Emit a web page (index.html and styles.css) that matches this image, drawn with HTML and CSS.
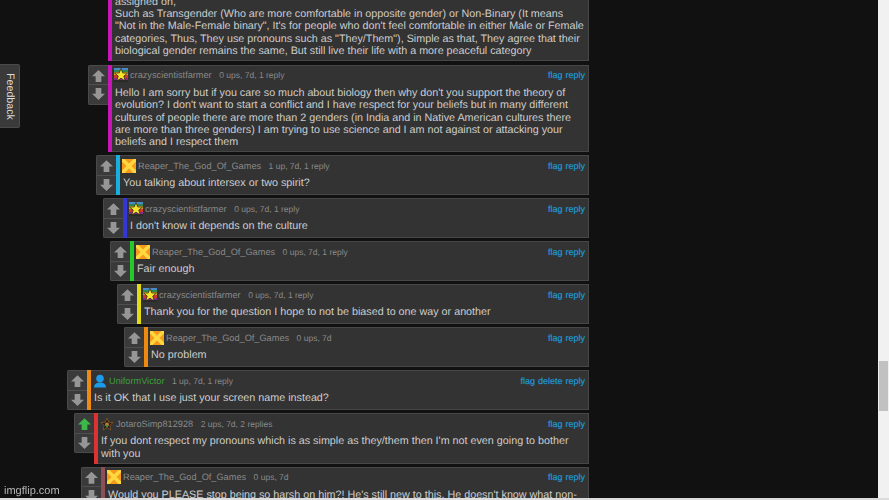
FILE: index.html
```html
<!DOCTYPE html>
<html lang="en">
<head>
  <meta charset="UTF-8" />
  <meta name="viewport" content="width=device-width, initial-scale=1.0"/>
  <title>Comments</title>
  <link rel="stylesheet" href="styles.css">
</head>
<body>

  <!-- Shared avatars -->
  <svg class="defs" width="0" height="0">
    <symbol id="av-flag" viewBox="0 0 14 14">
      <rect width="14" height="2" y="0" fill="#4a8ac8"/>
      <rect width="14" height="2" y="2" fill="#2d8a4e"/>
      <rect width="14" height="3" y="4" fill="#d8a020"/>
      <rect width="14" height="3" y="7" fill="#c83a2a"/>
      <rect width="14" height="2" y="10" fill="#8a2a8a"/>
      <rect width="14" height="2" y="12" fill="#2a2a2a"/>
      <polygon points="7,.5 8.800,5 13.500,5 9.800,8 11.200,13 7,10.200 2.800,13 4.200,8 .5,5 5.200,5" fill="#f6e52a" stroke="#1c1c1c" stroke-width=".7"/>
    </symbol>
    <symbol id="av-reaper" viewBox="0 0 14 14">
      <rect width="14" height="14" fill="#f59a1c"/>
      <path d="M0 0L14 14M14 0L0 14" stroke="#ffd840" stroke-width="3.500"/>
    </symbol>
    <symbol id="av-user" viewBox="0 0 14 14">
      <circle cx="7" cy="4.500" r="3.800" fill="#1c9bea"/>
      <path d="M1 13.500c0-3.500 2.500-5 6-5s6 1.500 6 5z" fill="#1c9bea"/>
    </symbol>
    <symbol id="av-star" viewBox="0 0 14 14">
      <polygon points="7,1 8.800,5.200 13,5.500 9.800,8.400 10.800,13 7,10.500 3.200,13 4.200,8.400 1,5.500 5.200,5.200" fill="#1d1d1d" stroke="#8a5a20" stroke-width=".8"/>
      <circle cx="7" cy="7.500" r="2" fill="#c8782a"/>
      <circle cx="7" cy="9" r="1.200" fill="#3f8f4f"/>
    </symbol>
  </svg>

  <div class="page">
    <div class="thread">

      <div class="com cut">
        <div class="bar magenta"></div>
        <div class="body">
          <p class="text">assigned on,<br>Such as Transgender (Who are more comfortable in opposite gender) or Non-Binary (It means "Not in the Male-Female binary", It's for people who don't feel comfortable in either Male or Female categories, Thus, They use pronouns such as "They/Them"), Simple as that, They agree that their biological gender remains the same, But still live their life with a more peaceful category</p>
        </div>
      </div>

      <div class="com d3">
        <div class="vote"><button class="up"></button><button class="down"></button></div>
        <div class="bar magenta"></div>
        <div class="body">
          <div class="head">
            <svg class="av"><use href="#av-flag"/></svg>
            <span class="name">crazyscientistfarmer</span>
            <span class="stats">0 ups, 7d, 1 reply</span>
            <span class="links"><a>flag</a><a>reply</a></span>
          </div>
          <p class="text">Hello I am sorry but if you care so much about biology then why don't you support the theory of evolution? I don't want to start a conflict and I have respect for your beliefs but in many different cultures of people there are more than 2 genders (in India and in Native American cultures there are more than three genders) I am trying to use science and I am not against or attacking your beliefs and I respect them</p>
        </div>
      </div>

      <div class="com d4">
        <div class="vote"><button class="up"></button><button class="down"></button></div>
        <div class="bar cyan"></div>
        <div class="body">
          <div class="head">
            <svg class="av"><use href="#av-reaper"/></svg>
            <span class="name">Reaper_The_God_Of_Games</span>
            <span class="stats">1 up, 7d, 1 reply</span>
            <span class="links"><a>flag</a><a>reply</a></span>
          </div>
          <p class="text">You talking about intersex or two spirit?</p>
        </div>
      </div>

      <div class="com d5">
        <div class="vote"><button class="up"></button><button class="down"></button></div>
        <div class="bar blue"></div>
        <div class="body">
          <div class="head">
            <svg class="av"><use href="#av-flag"/></svg>
            <span class="name">crazyscientistfarmer</span>
            <span class="stats">0 ups, 7d, 1 reply</span>
            <span class="links"><a>flag</a><a>reply</a></span>
          </div>
          <p class="text">I don't know it depends on the culture</p>
        </div>
      </div>

      <div class="com d6">
        <div class="vote"><button class="up"></button><button class="down"></button></div>
        <div class="bar green"></div>
        <div class="body">
          <div class="head">
            <svg class="av"><use href="#av-reaper"/></svg>
            <span class="name">Reaper_The_God_Of_Games</span>
            <span class="stats">0 ups, 7d, 1 reply</span>
            <span class="links"><a>flag</a><a>reply</a></span>
          </div>
          <p class="text">Fair enough</p>
        </div>
      </div>

      <div class="com d7">
        <div class="vote"><button class="up"></button><button class="down"></button></div>
        <div class="bar yellow"></div>
        <div class="body">
          <div class="head">
            <svg class="av"><use href="#av-flag"/></svg>
            <span class="name">crazyscientistfarmer</span>
            <span class="stats">0 ups, 7d, 1 reply</span>
            <span class="links"><a>flag</a><a>reply</a></span>
          </div>
          <p class="text">Thank you for the question I hope to not be biased to one way or another</p>
        </div>
      </div>

      <div class="com d8">
        <div class="vote"><button class="up"></button><button class="down"></button></div>
        <div class="bar orange"></div>
        <div class="body">
          <div class="head">
            <svg class="av"><use href="#av-reaper"/></svg>
            <span class="name">Reaper_The_God_Of_Games</span>
            <span class="stats">0 ups, 7d</span>
            <span class="links"><a>flag</a><a>reply</a></span>
          </div>
          <p class="text">No problem</p>
        </div>
      </div>

      <div class="com d0">
        <div class="vote"><button class="up"></button><button class="down"></button></div>
        <div class="bar orange"></div>
        <div class="body">
          <div class="head">
            <svg class="av"><use href="#av-user"/></svg>
            <span class="name me">UniformVictor</span>
            <span class="stats">1 up, 7d, 1 reply</span>
            <span class="links"><a>flag</a><a>delete</a><a>reply</a></span>
          </div>
          <p class="text">Is it OK that I use just your screen name instead?</p>
        </div>
      </div>

      <div class="com d1">
        <div class="vote"><button class="up on"></button><button class="down"></button></div>
        <div class="bar red"></div>
        <div class="body">
          <div class="head">
            <svg class="av"><use href="#av-star"/></svg>
            <span class="name">JotaroSimp812928</span>
            <span class="stats">2 ups, 7d, 2 replies</span>
            <span class="links"><a>flag</a><a>reply</a></span>
          </div>
          <p class="text">If you dont respect my pronouns which is as simple as they/them then I'm not even going to bother with you</p>
        </div>
      </div>

      <div class="com d2">
        <div class="vote"><button class="up"></button><button class="down"></button></div>
        <div class="bar brown"></div>
        <div class="body">
          <div class="head">
            <svg class="av"><use href="#av-reaper"/></svg>
            <span class="name">Reaper_The_God_Of_Games</span>
            <span class="stats">0 ups, 7d</span>
            <span class="links"><a>flag</a><a>reply</a></span>
          </div>
          <p class="text">Would you PLEASE stop being so harsh on him?! He's still new to this, He doesn't know what non-</p>
        </div>
      </div>

    </div>
  </div>

  <div class="feedback"><span>Feedback</span></div>
  <div class="watermark">imgflip.com</div>
  <div class="scroll"><div class="thumb"></div></div>
  <div class="edge"></div>

</body>
</html>
```

FILE: styles.css
```css
* {
  margin: 0;
  padding: 0;
  box-sizing: border-box;
}

html, body {
  height: 100%;
  overflow: hidden;
}

body {
  background: #111;
  font-family: "Liberation Sans", Arial, sans-serif;
  color: #cdcdcd;
  text-rendering: geometricPrecision;
}

.defs {
  position: absolute;
}

.page {
  height: 500px;
  overflow: hidden;
}

.thread {
  width: 589px;
  margin-top: -11.350px;
  display: flex;
  flex-direction: column;
  gap: 3px;
}

/* comment row: votes, colour bar, body */
.com {
  display: flex;
}

.d0 { margin-left: 67px; }
.d1 { margin-left: 74px; }
.d2 { margin-left: 81px; }
.d3 { margin-left: 88px; }
.d4 { margin-left: 96px; }
.d5 { margin-left: 103px; }
.d6 { margin-left: 110px; }
.d7 { margin-left: 117px; }
.d8 { margin-left: 124px; }

.cut {
  margin-left: 108px;
  margin-bottom: 1px;
}

.vote {
  width: 20px;
  flex: none;
  height: 40px;
  display: flex;
  flex-direction: column;
  background: #3a3a3a;
  border: 1px solid #4a4a4a;
  border-right: none;
  border-radius: 2px 0 0 2px;
}

.vote button {
  flex: 1;
  position: relative;
  border: none;
  background: none;
}

.vote .down {
  border-top: 1px solid #4f4f4f;
}

.vote button::before {
  content: "";
  position: absolute;
  left: 3px;
  top: 4px;
  width: 13px;
  height: 12px;
  background: #969696;
  clip-path: polygon(50% 0, 100% 52%, 72% 52%, 72% 100%, 28% 100%, 28% 52%, 0 52%);
}

.vote .down::before {
  top: 3px;
  transform: rotate(180deg);
}

.vote .on::before {
  background: #3cb84a;
}

.bar {
  width: 4px;
  flex: none;
}

.magenta { background: #c815b8; }
.cyan { background: #19aee0; }
.blue { background: #3436d6; }
.green { background: #25c92c; }
.yellow { background: #e2dc18; }
.orange { background: #ee8a12; }
.red { background: #dc3232; }
.brown { background: #8d4f55; }

.body {
  flex: 1;
  min-width: 0;
  background: #333;
  border: 1px solid #474747;
  border-left: none;
  padding: 2px 3px 2.700px 3px;
}

.head {
  display: flex;
  align-items: center;
  height: 15px;
  font-size: 9.200px;
  color: #8a8a8a;
}

.av {
  width: 14px;
  height: 14px;
  margin-left: -1px;
  margin-right: 2px;
  flex: none;
}

.stats {
  margin-left: 7.500px;
  font-size: 8.500px;
}

.me {
  color: #3f9f3c;
}

.links {
  margin-left: auto;
  display: flex;
  gap: 3px;
  color: #1e9ad6;
  font-size: 9px;
  -webkit-text-stroke: 0.2px #1e9ad6;
}

.text {
  font-size: 10.760px;
  line-height: 12.330px;
  margin-top: 4px;
}

/* things sitting over the page */
.feedback {
  position: fixed;
  left: 0;
  top: 64px;
  width: 20px;
  height: 64px;
  background: #3a3a3a;
  border: 1px solid #4a4a4a;
  border-left: none;
  border-radius: 0 2px 2px 0;
  display: flex;
  align-items: center;
  justify-content: center;
}

.feedback span {
  writing-mode: vertical-rl;
  font-size: 10.700px;
  color: #ddd;
}

.watermark {
  position: fixed;
  left: 4px;
  bottom: 3px;
  font-size: 11px;
  color: #b8b8b8;
}

.scroll {
  position: fixed;
  right: 0;
  top: 0;
  width: 11px;
  height: 100%;
  background: #f1f1f1;
}

.thumb {
  margin: 361px 1px 0;
  height: 50px;
  background: #c1c1c1;
}

.edge {
  position: fixed;
  left: 0;
  right: 0;
  bottom: 0;
  height: 2px;
  background: #dcdcdc;
}
```
